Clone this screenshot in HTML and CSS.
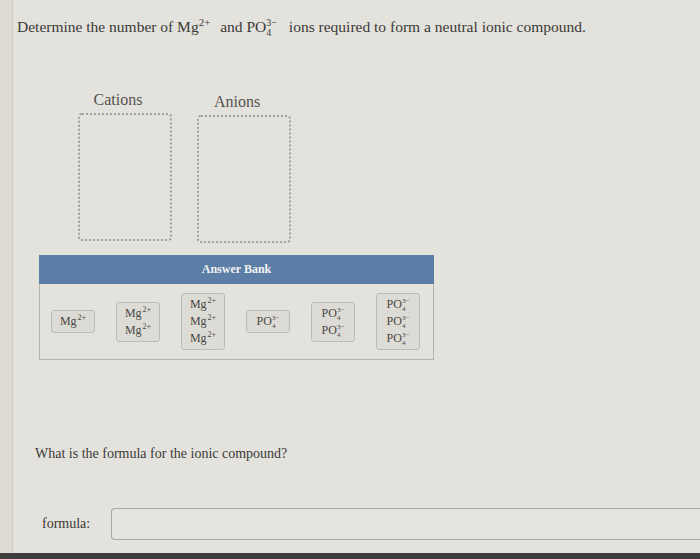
FILE: index.html
```html
<!DOCTYPE html>
<html>
<head>
<meta charset="utf-8">
<link rel="stylesheet" href="styles.css">
</head>
<body>
<div class="page">
  <div class="edge"></div>
  <main class="content">
    <p class="prompt">Determine the number of Mg<sup class="sup">2+</sup> and PO<span class="ion"><span class="i-sup">3&#8722;</span><span class="i-sub">4</span></span> ions required to form a neutral ionic compound.</p>

    <div class="bins">
      <div class="bin">
        <div class="bin-label">Cations</div>
        <div class="bin-box"></div>
      </div>
      <div class="bin bin-2">
        <div class="bin-label">Anions</div>
        <div class="bin-box"></div>
      </div>
    </div>

    <section class="bank">
      <div class="bank-head">Answer Bank</div>
      <div class="bank-body">
        <div class="tile">
          <div>Mg<sup class="tsup">2+</sup></div>
        </div>
        <div class="tile">
          <div>Mg<sup class="tsup">2+</sup></div>
          <div>Mg<sup class="tsup">2+</sup></div>
        </div>
        <div class="tile">
          <div>Mg<sup class="tsup">2+</sup></div>
          <div>Mg<sup class="tsup">2+</sup></div>
          <div>Mg<sup class="tsup">2+</sup></div>
        </div>
        <div class="tile">
          <div>PO<span class="ion"><span class="i-sup">3&#8722;</span><span class="i-sub">4</span></span></div>
        </div>
        <div class="tile">
          <div>PO<span class="ion"><span class="i-sup">3&#8722;</span><span class="i-sub">4</span></span></div>
          <div>PO<span class="ion"><span class="i-sup">3&#8722;</span><span class="i-sub">4</span></span></div>
        </div>
        <div class="tile">
          <div>PO<span class="ion"><span class="i-sup">3&#8722;</span><span class="i-sub">4</span></span></div>
          <div>PO<span class="ion"><span class="i-sup">3&#8722;</span><span class="i-sub">4</span></span></div>
          <div>PO<span class="ion"><span class="i-sup">3&#8722;</span><span class="i-sub">4</span></span></div>
        </div>
      </div>
    </section>

    <p class="question">What is the formula for the ionic compound?</p>

    <div class="formula-row">
      <span class="formula-label">formula:</span>
      <div class="formula-input"></div>
    </div>
  </main>
</div>
<div class="bottombar"></div>
</body>
</html>
```

FILE: styles.css
```css
html, body {
  margin: 0;
  padding: 0;
  background: #e4e2dc;
  font-family: "Liberation Serif", "Times New Roman", serif;
  color: #3b3a38;
}

.page {
  display: flex;
  height: 553px;
  overflow: hidden;
}

.edge {
  width: 12px;
  flex: none;
  background: #dedbd5;
  border-right: 1px solid #cfccc5;
}

.content {
  flex: 1;
}

.prompt {
  margin: 16px 0 0 4px;
  font-size: 15.5px;
  line-height: 22px;
  white-space: nowrap;
}

.sup {
  font-size: 11px;
  vertical-align: 6px;
  line-height: 0;
  margin-right: 6px;
}

.ion {
  display: inline-block;
  vertical-align: -4px;
  line-height: 10px;
  font-size: 10px;
  margin-right: 8px;
}

.i-sup, .i-sub {
  display: block;
}

.bins {
  display: flex;
  gap: 25px;
  margin: 53px 0 0 65px;
}

.bin {
  display: flex;
  flex-direction: column;
  width: 94px;
}

.bin-2 {
  margin-top: 2px;
}

.bin-label {
  font-size: 16px;
  color: #55534f;
  text-align: center;
  padding-right: 14px;
  line-height: 18px;
  height: 22px;
}

.bin-box {
  height: 124px;
  border: 2px dotted #a3a19c;
  border-radius: 4px;
}

.bank {
  margin: 12px 0 0 26px;
  width: 395px;
}

.bank-head {
  height: 29px;
  background: #5c7da6;
  color: #f3f3f3;
  font-size: 12px;
  font-weight: bold;
  display: flex;
  align-items: center;
  justify-content: center;
}

.bank-body {
  display: flex;
  align-items: center;
  gap: 21px;
  padding: 0 11px;
  height: 75px;
  border: 1px solid #b5b3ad;
  border-top: none;
}

.tile {
  width: 44px;
  box-sizing: border-box;
  border: 1px solid #bdbbb5;
  border-radius: 3px;
  background: #dddbd5;
  padding: 2px 0;
  font-size: 12px;
  line-height: 17px;
  color: #4a4844;
  display: flex;
  flex-direction: column;
  align-items: center;
}

.tile > div {
  height: 17px;
  white-space: nowrap;
}

.tsup {
  font-size: 8px;
  line-height: 0;
  vertical-align: 5px;
  margin-left: 1px;
}

.tile .ion {
  font-size: 7px;
  line-height: 8px;
  vertical-align: -3px;
  margin-left: 0;
  margin-right: 0;
}

.question {
  margin: 86px 0 0 22px;
  font-size: 14px;
  line-height: 16px;
}

.formula-row {
  display: flex;
  align-items: center;
  margin: 46px 0 0 29px;
}

.formula-label {
  font-size: 14px;
  width: 69px;
  flex: none;
}

.formula-input {
  flex: 1;
  height: 30px;
  border: 1px solid #a8a6a1;
  border-right: none;
  border-radius: 4px 0 0 4px;
  background: #e6e4de;
}

.bottombar {
  height: 6px;
  background: #3d3d3d;
}
```
